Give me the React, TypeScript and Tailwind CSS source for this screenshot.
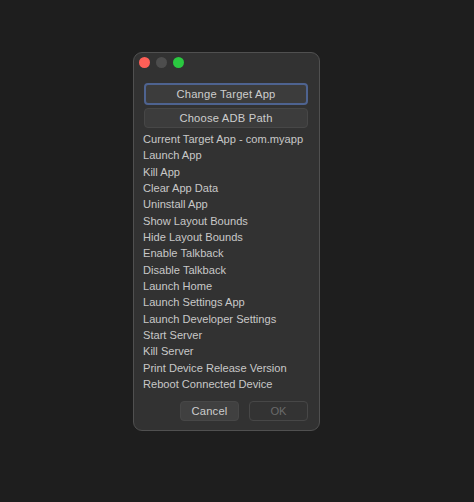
const items = [
  'Current Target App - com.myapp',
  'Launch App',
  'Kill App',
  'Clear App Data',
  'Uninstall App',
  'Show Layout Bounds',
  'Hide Layout Bounds',
  'Enable Talkback',
  'Disable Talkback',
  'Launch Home',
  'Launch Settings App',
  'Launch Developer Settings',
  'Start Server',
  'Kill Server',
  'Print Device Release Version',
  'Reboot Connected Device',
]

export default function App() {
  return (
    <div
      className="w-[474px] h-[502px] bg-[#1e1e1e] pl-[133px] pt-[52px]"
      style={{ fontFamily: '"Liberation Sans", Arial, sans-serif' }}
    >
      <div className="w-[187px] h-[379px] rounded-[9px] border border-[#505050] bg-[#323232] flex flex-col">
        <div className="flex items-center gap-[6px] pl-[5px] h-[19px]">
          <span className="w-[11px] h-[11px] rounded-full bg-[#fe5f57]" />
          <span className="w-[11px] h-[11px] rounded-full bg-[#4d4d4d]" />
          <span className="w-[11px] h-[11px] rounded-full bg-[#2ac840]" />
        </div>
        <div className="flex flex-col pl-[10px] pr-[11px] pt-[11px]">
          <button className="h-[22px] rounded-[4px] border-2 border-[#4e6390] bg-[#3c3c3c] text-[11.2px] tracking-[0.2px] text-[#cdcdcd]">
            Change Target App
          </button>
          <button className="mt-[3px] h-[20px] rounded-[4px] border border-[#474747] bg-[#3c3c3c] text-[11.2px] tracking-[0.2px] text-[#cdcdcd]">
            Choose ADB Path
          </button>
          <div className="mt-[3px] -ml-[1px] flex flex-col text-[11.1px] leading-[16.33px] text-[#c8c8c8]">
            {items.map((item) => (
              <div key={item} className="whitespace-nowrap">
                {item}
              </div>
            ))}
          </div>
          <div className="mt-[9px] flex justify-end gap-[10px]">
            <button className="w-[59px] h-[20px] rounded-[4px] border border-[#474747] bg-[#404040] text-[11.2px] tracking-[0.2px] text-[#cdcdcd]">
              Cancel
            </button>
            <button className="w-[59px] h-[20px] rounded-[4px] border border-[#474747] bg-[#333333] text-[11.2px] text-[#6a6a6a]">
              OK
            </button>
          </div>
        </div>
      </div>
    </div>
  )
}
